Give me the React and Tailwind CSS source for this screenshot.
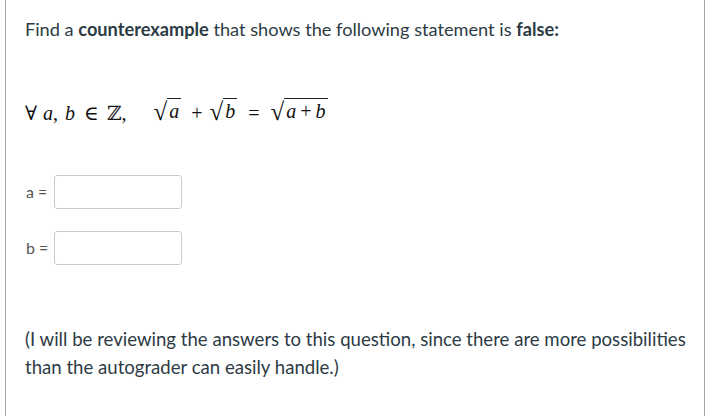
import React from 'react';

function Root({ children }) {
  return (
    <span className="inline-flex items-end">
      <span className="text-[25px] leading-none not-italic mb-[-2px]">√</span>
      <span className="border-t border-[#222] leading-[21px] pt-[2px] px-[2px] mt-[2px]">{children}</span>
    </span>
  );
}

function Field({ label }) {
  return (
    <div className="flex items-center gap-[5px]">
      <span className="text-[16px] text-[#555] w-[23px]">{label} =</span>
      <input type="text" className="w-[128px] h-[34px] border border-[#ccc] rounded-[3px] bg-white" />
    </div>
  );
}

export default function App() {
  return (
    <div className="w-[717px] h-[416px] bg-white" style={{ fontFamily: 'Lato, "Open Sans", sans-serif' }}>
      <div className="mx-[5px] w-[700px] h-full border-x border-[#a5a5a5] pl-[19px] pr-[8px] pt-[16px] text-[#2d3b45]">
        <p className="text-[18.2px] leading-[26px]">
          Find a <strong className="font-bold">counterexample</strong> that shows the following statement is <strong className="font-bold">false:</strong>
        </p>
        <div
          className="mt-[56px] flex items-end text-[20px] text-[#111] h-[30px]"
          style={{ fontFamily: '"Liberation Serif", "DejaVu Serif", serif' }}
        >
          <span>∀</span>
          <span className="italic ml-[6px]">a</span>
          <span>,</span>
          <span className="italic ml-[7px]">b</span>
          <span className="ml-[9px]">∈</span>
          <span className="ml-[8px]" style={{ fontFamily: '"DejaVu Serif", serif' }}>ℤ</span>
          <span>,</span>
          <span className="ml-[27px] italic"><Root>a</Root></span>
          <span className="ml-[10px]">+</span>
          <span className="ml-[7px] italic"><Root>b</Root></span>
          <span className="ml-[11px]">=</span>
          <span className="ml-[11px]">
            <Root><span className="italic">a</span><span className="mx-[4px]">+</span><span className="italic">b</span></Root>
          </span>
        </div>
        <div className="mt-[47px] ml-[1px] flex flex-col gap-[22px]">
          <Field label="a" />
          <Field label="b" />
        </div>
        <p className="mt-[60px] text-[18.6px] leading-[28px]">
          (I will be reviewing the answers to this question, since there are more possibilities than the autograder can easily handle.)
        </p>
      </div>
    </div>
  );
}
